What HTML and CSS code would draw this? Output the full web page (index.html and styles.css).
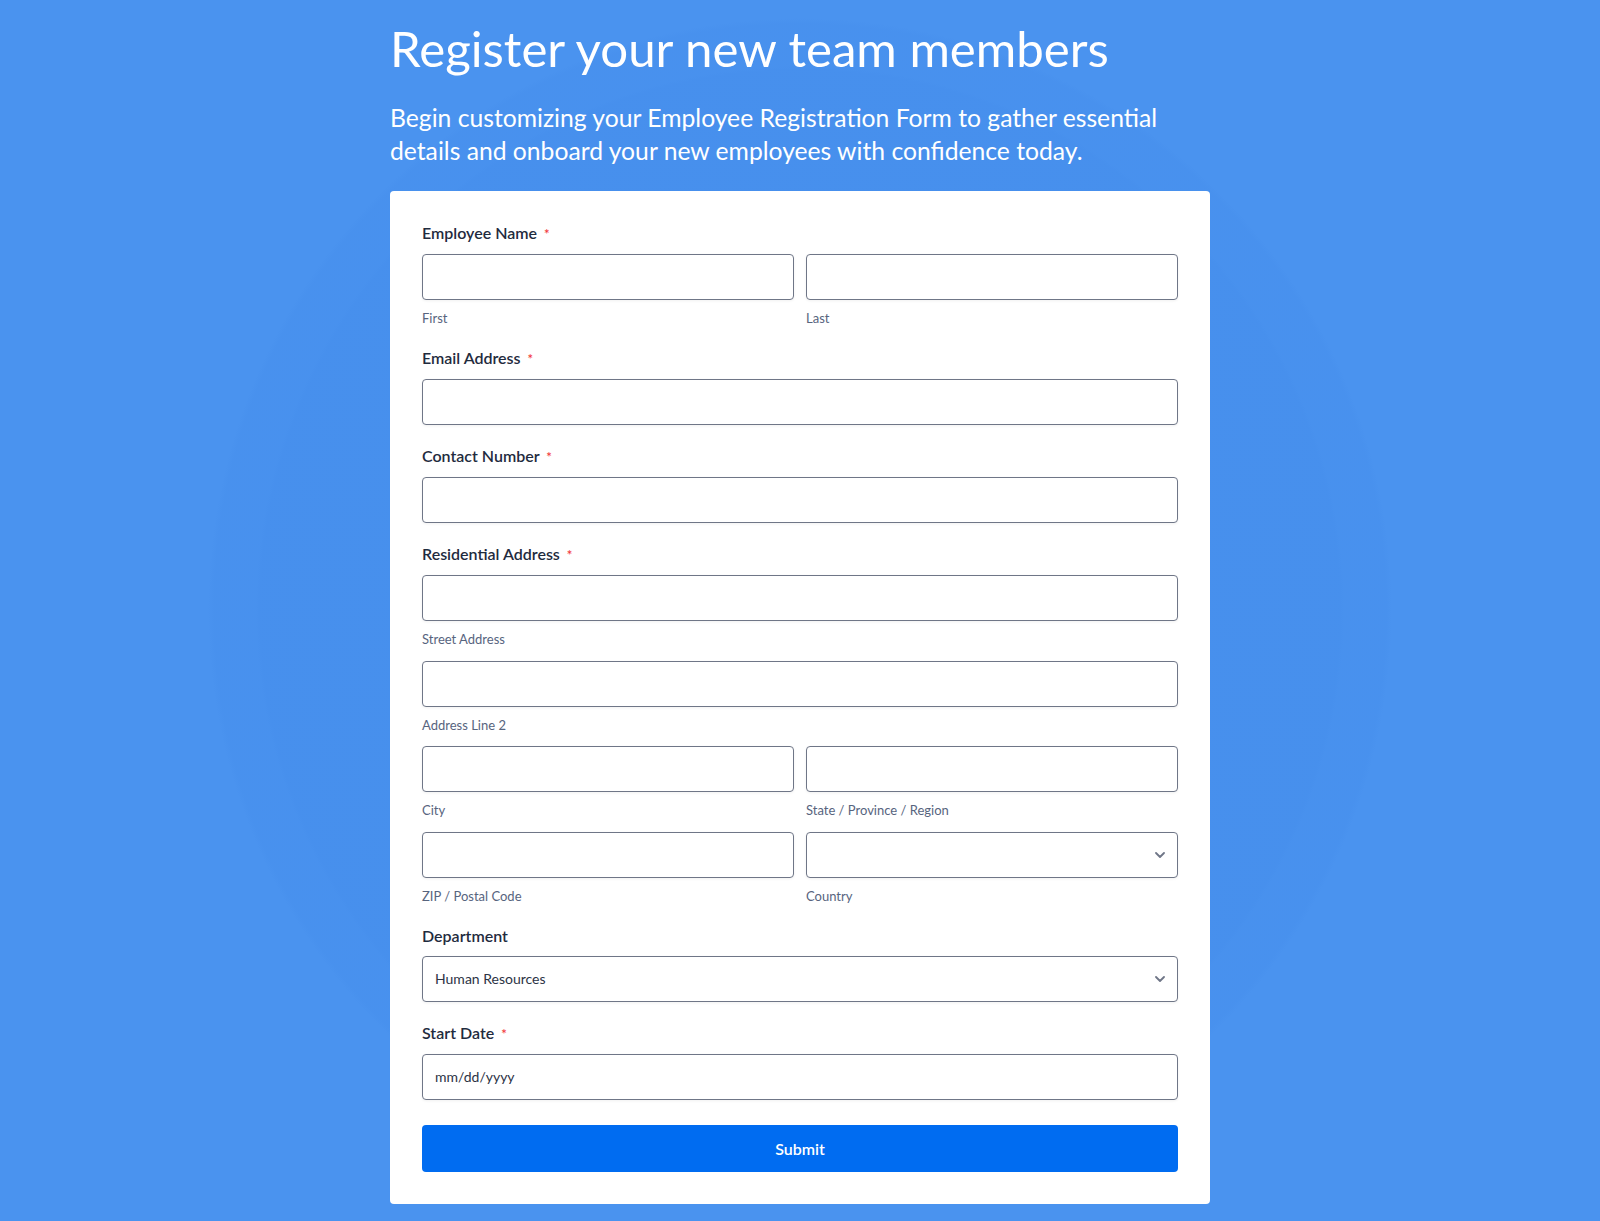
FILE: index.html
```html
<!DOCTYPE html>
<html lang="en">
  <head>
    <meta charset="UTF-8" />
    <meta name="viewport" content="width=device-width, initial-scale=1.0" />
    <title>Employee Registration Form</title>
    <link rel="stylesheet" href="styles.css">
  </head>
  <body>
    <div class="page">
      <header class="intro">
        <h1 class="title">Register your new team members</h1>
        <p class="lead">Begin customizing your Employee Registration Form to gather essential details and onboard your new employees with confidence today.</p>
      </header>

      <form class="card">
        <div class="field">
          <label class="label">Employee Name <span class="req">*</span></label>
          <div class="row">
            <div class="sub">
              <input class="box" type="text" id="first-name" />
              <label for="first-name" class="hint">First</label>
            </div>
            <div class="sub">
              <input class="box" type="text" id="last-name" />
              <label for="last-name" class="hint">Last</label>
            </div>
          </div>
        </div>

        <div class="field">
          <label for="email" class="label">Email Address <span class="req">*</span></label>
          <input class="box" type="email" id="email" />
        </div>

        <div class="field">
          <label for="phone" class="label">Contact Number <span class="req">*</span></label>
          <input class="box" type="tel" id="phone" />
        </div>

        <div class="field">
          <label class="label">Residential Address <span class="req">*</span></label>
          <div class="address">
            <div class="sub">
              <input class="box" type="text" id="street" />
              <label for="street" class="hint">Street Address</label>
            </div>
            <div class="sub">
              <input class="box" type="text" id="street2" />
              <label for="street2" class="hint">Address Line 2</label>
            </div>
            <div class="row">
              <div class="sub">
                <input class="box" type="text" id="city" />
                <label for="city" class="hint">City</label>
              </div>
              <div class="sub">
                <input class="box" type="text" id="state" />
                <label for="state" class="hint">State / Province / Region</label>
              </div>
            </div>
            <div class="row">
              <div class="sub">
                <input class="box" type="text" id="zip" />
                <label for="zip" class="hint">ZIP / Postal Code</label>
              </div>
              <div class="sub">
                <div class="select-wrap">
                  <select class="box select" id="country">
                    <option value=""></option>
                    <option>United States</option>
                    <option>Canada</option>
                  </select>
                  <svg class="chevron" width="10" height="6" viewBox="0 0 10 6"><path d="M1 1l4 4 4-4" fill="none" stroke="#6f7687" stroke-width="1.8" stroke-linecap="round" stroke-linejoin="round"/></svg>
                </div>
                <label for="country" class="hint">Country</label>
              </div>
            </div>
          </div>
        </div>

        <div class="field">
          <label for="department" class="label">Department</label>
          <div class="select-wrap">
            <select class="box select" id="department">
              <option>Human Resources</option>
              <option>Engineering</option>
              <option>Finance</option>
              <option>Marketing</option>
            </select>
            <svg class="chevron" width="10" height="6" viewBox="0 0 10 6"><path d="M1 1l4 4 4-4" fill="none" stroke="#6f7687" stroke-width="1.8" stroke-linecap="round" stroke-linejoin="round"/></svg>
          </div>
        </div>

        <div class="field">
          <label for="start-date" class="label">Start Date <span class="req">*</span></label>
          <input class="box" type="text" id="start-date" placeholder="mm/dd/yyyy" />
        </div>

        <div class="actions">
          <button class="submit" type="submit">Submit</button>
        </div>
      </form>
    </div>
  </body>
</html>
```

FILE: styles.css
```css
* {
  box-sizing: border-box;
}
body {
  margin: 0;
  min-height: 100vh;
  font-family: Lato, "Open Sans", sans-serif;
  color: #2c3345;
  background-color: #4a93ef;
  /* two soft rings behind the form */
  background-image:
    radial-gradient(circle at 800px 610px, rgba(30, 100, 210, 0.07) 0, rgba(30, 100, 210, 0.07) 540px, rgba(30, 100, 210, 0.045) 544px, rgba(30, 100, 210, 0.045) 586px, rgba(30, 100, 210, 0) 592px);
}
.page {
  width: 820px;
  margin: 0 auto;
  padding: 18px 0 18px;
}

/* heading above the form */
.title {
  margin: 0;
  font-size: 49.2px;
  line-height: 1.2;
  font-weight: 400;
  color: #fff;
}
.lead {
  margin: 24px 0 24px;
  font-size: 24.7px;
  line-height: 33px;
  color: #fff;
}

/* form card */
.card {
  background-color: #fff;
  border-radius: 4px;
  padding: 31px 32px 32px;
}
.field {
  margin-bottom: 20px;
}
.label {
  display: block;
  font-size: 16px;
  line-height: 22px;
  font-weight: 600;
  color: #1f2b3e;
  margin-bottom: 9px;
}
.req {
  color: #f23a3c;
  font-size: 13px;
  margin-left: 3px;
}
.row {
  display: flex;
  gap: 12px;
}
.row .sub {
  flex: 1;
}
.address {
  display: flex;
  flex-direction: column;
  gap: 12.5px;
}
.hint {
  display: block;
  margin-top: 9px;
  font-size: 13px;
  line-height: 18px;
  color: #57647e;
}
.box {
  display: block;
  width: 100%;
  height: 46px;
  border: 1px solid #6f7687;
  border-radius: 4px;
  background-color: #fff;
  box-shadow: 0 1px 3px rgba(0, 0, 0, 0.06);
  padding: 0 12px;
  font-family: Lato, "Open Sans", sans-serif;
  font-size: 14px;
  color: #2c3345;
  outline: none;
}
.box::placeholder {
  color: #2c3345;
}
.select-wrap {
  position: relative;
}
.select {
  appearance: none;
  -webkit-appearance: none;
}
.chevron {
  position: absolute;
  right: 13px;
  top: 20px;
  pointer-events: none;
}

.actions {
  padding-top: 5px;
}
.submit {
  display: block;
  width: 100%;
  height: 47px;
  border: none;
  border-radius: 4px;
  background-color: #006cf1;
  color: #fff;
  font-family: Lato, "Open Sans", sans-serif;
  font-size: 16px;
  font-weight: 600;
  cursor: pointer;
}
```
